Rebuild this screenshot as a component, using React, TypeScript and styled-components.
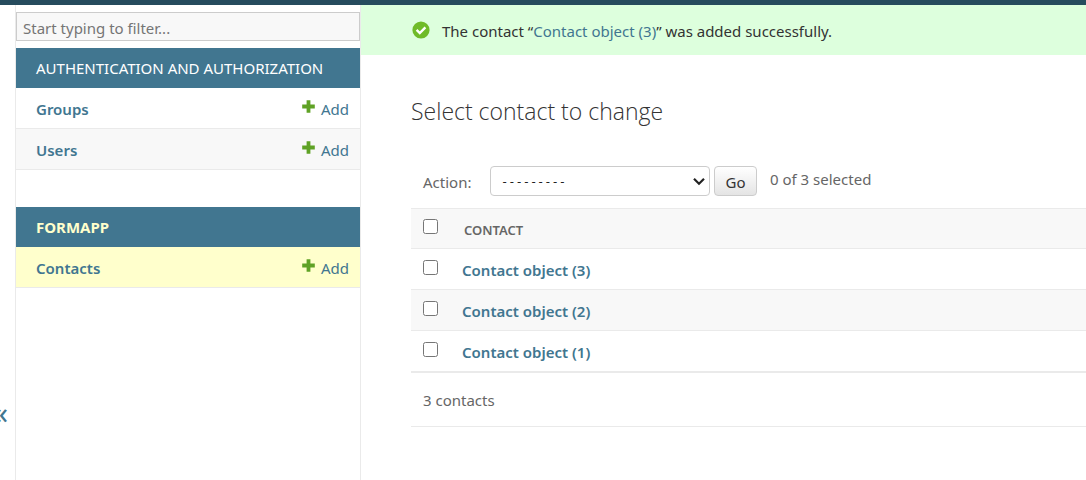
import React from "react";
import styled, { createGlobalStyle } from "styled-components";

const GlobalStyle = createGlobalStyle`
  * { box-sizing: border-box; }
  body {
    margin: 0;
    background: #fff;
    color: #333;
    font-family: "Segoe UI", "Noto Sans", sans-serif;
    font-size: 15px;
    line-height: 20px;
  }
  a { color: #417690; text-decoration: none; }
`;

const Page = styled.div`
  display: flex;
  flex-direction: column;
  min-height: 100vh;
  overflow: hidden;
`;

const TopBar = styled.header`
  height: 5px;
  background: #264b5d;
`;

const Main = styled.div`
  display: flex;
  flex: 1;
`;

const ToggleButton = styled.button`
  display: flex;
  justify-content: flex-end;
  align-items: flex-start;
  width: 16px;
  flex: none;
  padding: 396px 7px 0 0;
  border: 0;
  border-right: 1px solid #eaeaea;
  background: #fff;
  color: #417690;
  font: 400 30px/24px "Segoe UI", "Noto Sans", sans-serif;
  cursor: pointer;
`;

const Sidebar = styled.nav`
  width: 345px;
  flex: none;
  padding-top: 7px;
  border-right: 1px solid #eaeaea;
`;

const Filter = styled.input`
  display: block;
  width: 100%;
  height: 29px;
  margin-bottom: 7px;
  padding: 2px 6px 0;
  border: 1px solid #ccc;
  border-radius: 0;
  background: #f8f8f8;
  color: #333;
  font: inherit;
  &::placeholder { color: #757575; }
`;

const Module = styled.section`
  margin-bottom: 37px;
`;

const ModuleTitle = styled.h2<{ $current?: boolean }>`
  margin: 0;
  padding: 10px 20px;
  background: #417690;
  font-size: 15px;
  line-height: 20px;
  font-weight: ${(p) => (p.$current ? 700 : 400)};
  text-transform: uppercase;
  white-space: nowrap;
  a { color: ${(p) => (p.$current ? "#ffc" : "#fff")}; }
`;

const ModelRow = styled.div<{ $tone?: "alt" | "current" }>`
  display: flex;
  justify-content: space-between;
  height: 41px;
  padding: 11px 11px 9px 20px;
  border-bottom: 1px solid #eaeaea;
  background: ${(p) =>
    p.$tone === "current" ? "#ffc" : p.$tone === "alt" ? "#f8f8f8" : "#fff"};
`;

const ModelLink = styled.a`
  font-weight: 600;
`;

const AddLink = styled.a`
  display: flex;
  gap: 6px;
`;

const PlusIcon = styled.svg`
  width: 13px;
  height: 14px;
  padding-top: 1px;
`;

const Content = styled.main`
  flex: 1;
  min-width: 0;
`;

const Message = styled.div`
  display: flex;
  align-items: center;
  gap: 12px;
  height: 50px;
  padding: 2px 10px 0 51px;
  background: #dfd;
`;

const MessageIcon = styled.svg`
  width: 18px;
  height: 18px;
  margin-bottom: 2px;
`;

const Changelist = styled.div`
  padding: 40px 0 0 50px;
`;

const Title = styled.h1`
  margin: 0 0 38px;
  font-family: "Segoe UI", "Open Sans", sans-serif;
  font-size: 23px;
  line-height: 33px;
  font-weight: 300;
`;

const Actions = styled.form`
  display: flex;
  align-items: center;
  height: 30px;
  margin-bottom: 12px;
  padding-left: 12px;
  color: #666;
`;

const ActionLabel = styled.label`
  width: 67px;
  padding-top: 2px;
`;

const SelectWrap = styled.div`
  position: relative;
  width: 220px;
  margin-right: 4px;
`;

const ActionSelect = styled.select`
  display: block;
  appearance: none;
  width: 100%;
  height: 30px;
  padding: 2px 24px 0 10px;
  border: 1px solid #ccc;
  border-radius: 4px;
  background: #fff;
  color: #222;
  font: 12px/20px "DejaVu Sans Mono", monospace;
`;

const Chevron = styled.svg`
  position: absolute;
  top: 11px;
  right: 5px;
  width: 12px;
  height: 9px;
  pointer-events: none;
`;

const GoButton = styled.button`
  width: 43px;
  height: 30px;
  margin-right: 13px;
  padding: 2px 0 0;
  border: 1px solid #ccc;
  border-radius: 4px;
  background: linear-gradient(#fff, #e4e4e4);
  color: #333;
  font: inherit;
  cursor: pointer;
`;

const Counter = styled.span`
  padding-bottom: 4px;
`;

const Results = styled.table`
  width: 100%;
  border-collapse: separate;
  border-spacing: 0;
  border-top: 1px solid #eaeaea;
  border-bottom: 1px solid #eaeaea;
`;

const Row = styled.tr<{ $alt?: boolean }>`
  background: ${(p) => (p.$alt ? "#f8f8f8" : "#fff")};
`;

const HeadCell = styled.th`
  height: 40px;
  padding: 3px 3px 0;
  border-bottom: 1px solid #eaeaea;
  color: #666;
  font-size: 13px;
  font-weight: 600;
  text-align: left;
  text-transform: uppercase;
`;

const CheckCell = styled.td<{ $head?: boolean }>`
  width: 50px;
  height: ${(p) => (p.$head ? 40 : 41)}px;
  padding: ${(p) => (p.$head ? 10 : 11)}px 0 0 12px;
  border-bottom: 1px solid #eaeaea;
  vertical-align: top;
`;

const Check = styled.input`
  display: block;
  width: 15px;
  height: 15px;
  margin: 0;
`;

const NameCell = styled.th`
  padding: 2px 1px 0;
  border-bottom: 1px solid #eaeaea;
  font-weight: 600;
  text-align: left;
`;

const Paginator = styled.p`
  margin: 0;
  padding: 17px 12px 16px;
  border-bottom: 1px solid #eaeaea;
  color: #666;
`;

function Model({ name, tone }: { name: string; tone?: "alt" | "current" }) {
  return (
    <ModelRow $tone={tone}>
      <ModelLink href="#">{name}</ModelLink>
      <AddLink href="#">
        <PlusIcon viewBox="0 0 13 13" aria-hidden="true">
          <path d="M4.6 0.2h3.8v4.4h4.4v3.8H8.4v4.4H4.6V8.4H0.2V4.6h4.4z" fill="#5fa225" />
        </PlusIcon>
        Add
      </AddLink>
    </ModelRow>
  );
}

const contacts = ["Contact object (3)", "Contact object (2)", "Contact object (1)"];

export default function App() {
  return (
    <Page>
      <GlobalStyle />
      <TopBar />
      <Main>
        <ToggleButton type="button" aria-label="Toggle navigation">«</ToggleButton>
        <Sidebar>
          <Filter type="text" placeholder="Start typing to filter..." aria-label="Filter navigation items" />
          <Module>
            <ModuleTitle><a href="#">Authentication and Authorization</a></ModuleTitle>
            <Model name="Groups" />
            <Model name="Users" tone="alt" />
          </Module>
          <Module>
            <ModuleTitle $current><a href="#">Formapp</a></ModuleTitle>
            <Model name="Contacts" tone="current" />
          </Module>
        </Sidebar>
        <Content>
          <Message role="status">
            <MessageIcon viewBox="0 0 18 18" aria-hidden="true">
              <circle cx="9" cy="9" r="8.6" fill="#6fbb28" />
              <path d="M4.6 8.8l3.2 3.2 5.6-5.6" fill="none" stroke="#fff" strokeWidth="2.4" />
            </MessageIcon>
            <span>
              The contact “<a href="#">Contact object (3)</a>” was added successfully.
            </span>
          </Message>
          <Changelist>
            <Title>Select contact to change</Title>
            <Actions onSubmit={(e) => e.preventDefault()}>
              <ActionLabel htmlFor="action">Action:</ActionLabel>
              <SelectWrap>
                <ActionSelect id="action">
                  <option>---------</option>
                  <option>Delete selected contacts</option>
                </ActionSelect>
                <Chevron viewBox="0 0 12 9" aria-hidden="true">
                  <path d="M1 1.8l5 5 5-5" fill="none" stroke="#222" strokeWidth="2.2" />
                </Chevron>
              </SelectWrap>
              <GoButton type="submit">Go</GoButton>
              <Counter>0 of 3 selected</Counter>
            </Actions>
            <Results>
              <thead>
                <Row $alt>
                  <CheckCell $head><Check type="checkbox" aria-label="Select all contacts" /></CheckCell>
                  <HeadCell scope="col">Contact</HeadCell>
                </Row>
              </thead>
              <tbody>
                {contacts.map((name, i) => (
                  <Row key={name} $alt={i % 2 === 1}>
                    <CheckCell><Check type="checkbox" aria-label={"Select " + name} /></CheckCell>
                    <NameCell scope="row"><a href="#">{name}</a></NameCell>
                  </Row>
                ))}
              </tbody>
            </Results>
            <Paginator>3 contacts</Paginator>
          </Changelist>
        </Content>
      </Main>
    </Page>
  );
}
